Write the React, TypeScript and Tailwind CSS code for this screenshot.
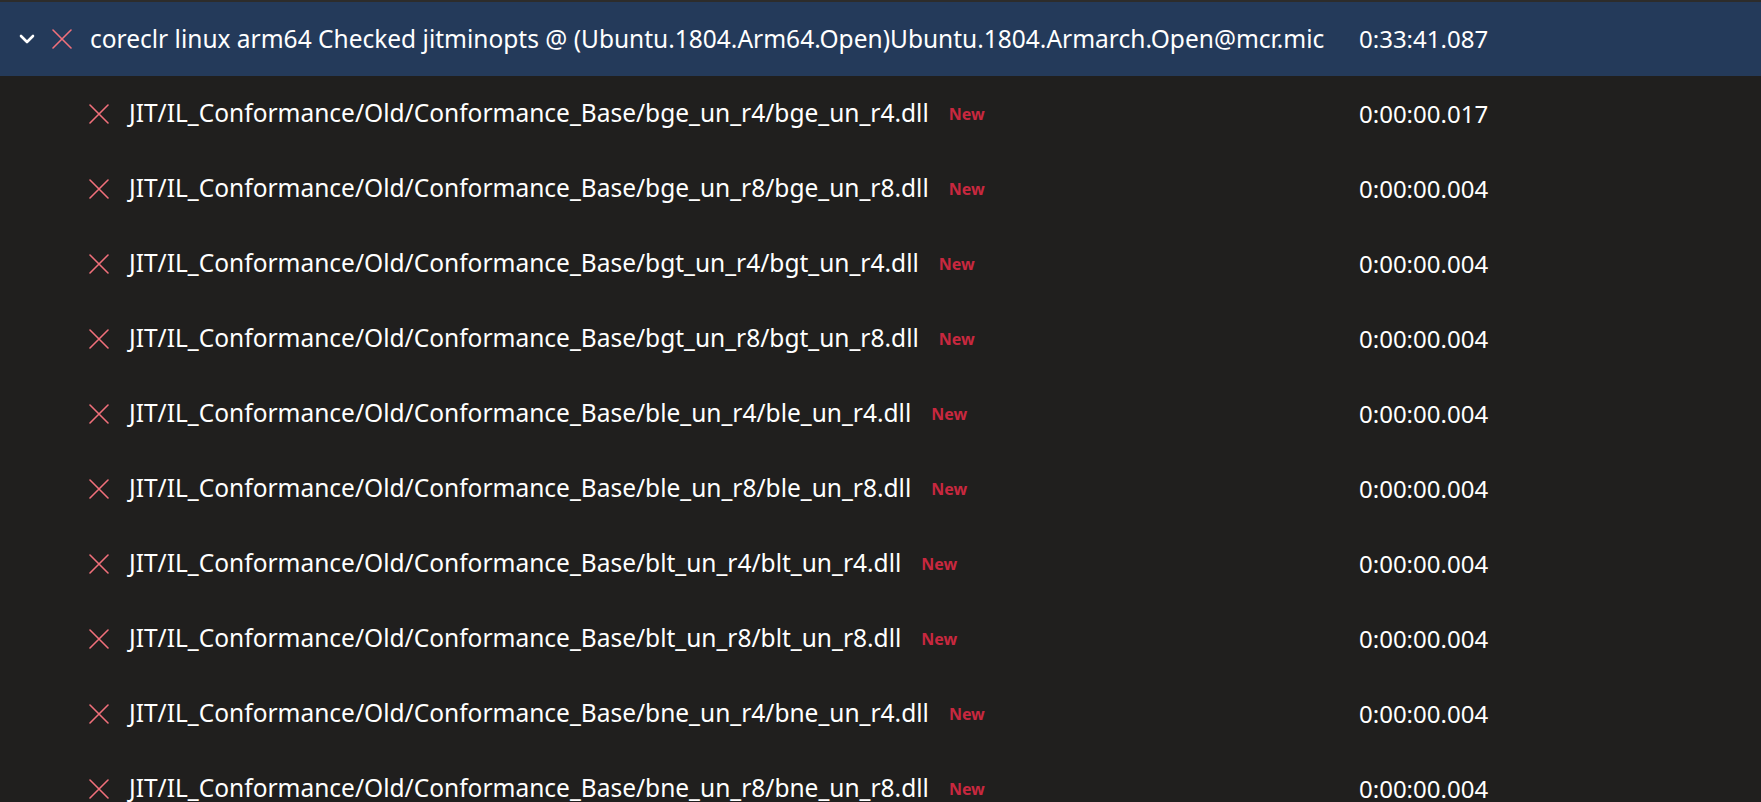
const rows = [
  { name: 'JIT/IL_Conformance/Old/Conformance_Base/bge_un_r4/bge_un_r4.dll', time: '0:00:00.017' },
  { name: 'JIT/IL_Conformance/Old/Conformance_Base/bge_un_r8/bge_un_r8.dll', time: '0:00:00.004' },
  { name: 'JIT/IL_Conformance/Old/Conformance_Base/bgt_un_r4/bgt_un_r4.dll', time: '0:00:00.004' },
  { name: 'JIT/IL_Conformance/Old/Conformance_Base/bgt_un_r8/bgt_un_r8.dll', time: '0:00:00.004' },
  { name: 'JIT/IL_Conformance/Old/Conformance_Base/ble_un_r4/ble_un_r4.dll', time: '0:00:00.004' },
  { name: 'JIT/IL_Conformance/Old/Conformance_Base/ble_un_r8/ble_un_r8.dll', time: '0:00:00.004' },
  { name: 'JIT/IL_Conformance/Old/Conformance_Base/blt_un_r4/blt_un_r4.dll', time: '0:00:00.004' },
  { name: 'JIT/IL_Conformance/Old/Conformance_Base/blt_un_r8/blt_un_r8.dll', time: '0:00:00.004' },
  { name: 'JIT/IL_Conformance/Old/Conformance_Base/bne_un_r4/bne_un_r4.dll', time: '0:00:00.004' },
  { name: 'JIT/IL_Conformance/Old/Conformance_Base/bne_un_r8/bne_un_r8.dll', time: '0:00:00.004' },
];

const FailIcon = () => (
  <svg width="20" height="20" viewBox="0 0 20 20" className="shrink-0">
    <path d="M1 1L19 19M19 1L1 19" stroke="#f1707b" strokeWidth="1.6" strokeLinecap="round" />
  </svg>
);

const Chevron = () => (
  <svg width="16" height="10" viewBox="0 0 16 10" className="shrink-0">
    <path d="M2 2L8 8L14 2" stroke="#ffffff" strokeWidth="2.6" fill="none" strokeLinecap="round" strokeLinejoin="round" />
  </svg>
);

export default function App() {
  return (
    <div
      className="h-[802px] w-full overflow-hidden bg-[#201f1e] text-[24px] text-white"
      style={{ fontFamily: '"Noto Sans", "Open Sans", sans-serif' }}
    >
      <div className="h-[2px] bg-[#2d2c2b]" />
      <div className="flex h-[74px] items-center bg-[#243a5a]">
        <div className="ml-[19px] flex w-[16px] justify-center">
          <Chevron />
        </div>
        <div className="ml-[17px]">
          <FailIcon />
        </div>
        <div className="ml-[18px] w-[1239px] shrink-0 overflow-hidden whitespace-nowrap text-[24.5px]">
          <span>coreclr linux arm64 Checked jitminopts @ (Ubuntu.1804.Arm64.Open)Ubuntu.1804.Armarch.Open@mcr.mic</span>
        </div>
        <div className="pl-[30px] whitespace-nowrap">0:33:41.087</div>
      </div>
      {rows.map((r) => (
        <div key={r.name} className="flex h-[75px] items-center">
          <div className="ml-[89px]">
            <FailIcon />
          </div>
          <div className="ml-[20px] flex w-[1200px] shrink-0 items-center whitespace-nowrap">
            <span className="text-[24.5px]">{r.name}</span>
            <span className="ml-[20px] text-[16px] font-bold text-[#c8283f]">New</span>
          </div>
          <div className="pl-[30px] whitespace-nowrap">{r.time}</div>
        </div>
      ))}
    </div>
  );
}
